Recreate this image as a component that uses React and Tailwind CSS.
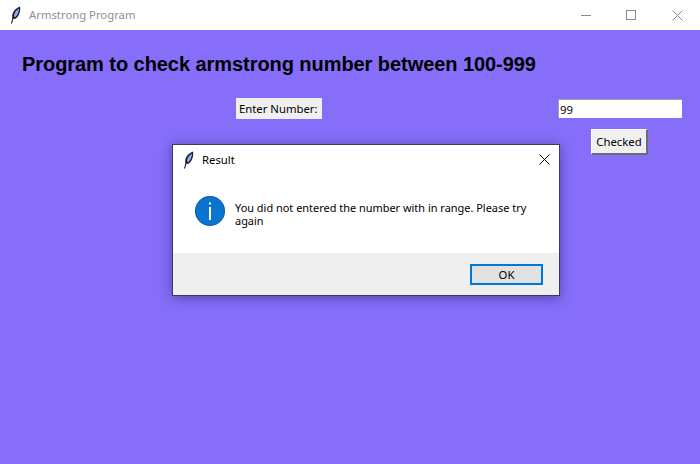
import React from 'react'

const Feather = () => (
  <svg width="12" height="18" viewBox="0 0 12 18" className="shrink-0">
    <path d="M1.5 17.5 L4 9" stroke="#000" strokeWidth="1" fill="none" />
    <path d="M2.5 12.5 C1 8 4 3 10 0.5 C11 5 9 10.5 5 13 Z" fill="#1c2230" />
    <path d="M4 10.5 C4 7 6.5 4 9 2.5 C9 5.5 7.5 9 5.5 11 Z" fill="#8fb2ea" />
  </svg>
)

const CloseIcon = ({ className }) => (
  <svg width="11" height="11" viewBox="0 0 11 11" className={className}>
    <path d="M0.5 0.5 L10.5 10.5 M10.5 0.5 L0.5 10.5" stroke="currentColor" strokeWidth="1" fill="none" />
  </svg>
)

const App = () => {
  return (
    <div className="relative w-[700px] h-[464px] overflow-hidden bg-[#866efa] font-['Noto_Sans','Open_Sans',sans-serif] text-[11.3px] text-black">
      {/* Title bar */}
      <div className="flex h-[30px] items-center bg-white">
        <div className="ml-[10px] flex items-center gap-[7px]">
          <Feather />
          <span className="text-[#8f8f8f] leading-none">Armstrong Program</span>
        </div>
        <div className="ml-auto flex items-center text-[#8a8a8a]">
          <div className="mr-[35px] h-px w-[10px] bg-[#8a8a8a]" />
          <div className="mr-[36px] h-[10px] w-[10px] border border-[#8a8a8a]" />
          <CloseIcon className="mr-[17px]" />
        </div>
      </div>

      {/* Heading */}
      <h1 className="ml-[22px] mt-[21px] font-['Liberation_Sans',sans-serif] text-xl font-bold leading-[26px] tracking-[-0.06px]">
        Program to check armstrong number between 100-999
      </h1>

      {/* Form */}
      <div className="mt-[21px] flex items-center">
        <div className="ml-[236px] flex h-[21px] w-[86px] items-center whitespace-nowrap bg-[#f0f0f0] pl-[3px] pt-[1px]">Enter Number:</div>
        <input
          readOnly
          value="99"
          className="ml-[236px] h-[19px] w-[124px] border-l border-t border-[#a0a0a0] bg-white pl-[1px] text-[11.3px] outline-none"
        />
      </div>
      <div className="mt-[10px] flex">
        <button className="ml-[591px] h-[26px] w-[57px] border border-white border-r-[#6d6d6d] border-b-[#6d6d6d] border-r-2 border-b-2 bg-[#f0f0f0] pt-[1px] text-[11.3px]">
          Checked
        </button>
      </div>

      {/* Message box */}
      <div className="absolute left-[172px] top-[144px] flex h-[152px] w-[388px] flex-col border border-[#3e3a55] bg-white shadow-[0_2px_12px_rgba(30,20,80,0.45)]">
        <div className="flex h-[29px] items-center pl-[10px]">
          <Feather />
          <span className="ml-[7px] pt-[1px]">Result</span>
          <CloseIcon className="ml-auto mr-[9px] text-black" />
        </div>
        <div className="flex flex-1 items-center pb-[5px] pl-[22px]">
          <svg width="30" height="30" viewBox="0 0 30 30" className="shrink-0">
            <circle cx="15" cy="15" r="15" fill="#0a74cf" />
            <circle cx="15" cy="15" r="14.5" fill="none" stroke="#1760a8" />
            <rect x="14" y="6.5" width="2" height="2" fill="#fff" />
            <rect x="14" y="11" width="2" height="13" fill="#fff" />
          </svg>
          <p className="ml-[10px] mt-[5px] w-[310px] text-[10.95px] leading-[13px]">
            You did not entered the number with in range. Please try again
          </p>
        </div>
        <div className="flex h-[42px] items-center justify-end bg-[#efefef] pr-[16px]">
          <button className="h-[21px] w-[73px] border-2 border-[#0078d7] bg-[#e1e1e1] pt-[1px] text-[11.3px]">OK</button>
        </div>
      </div>
    </div>
  )
}

export default App
